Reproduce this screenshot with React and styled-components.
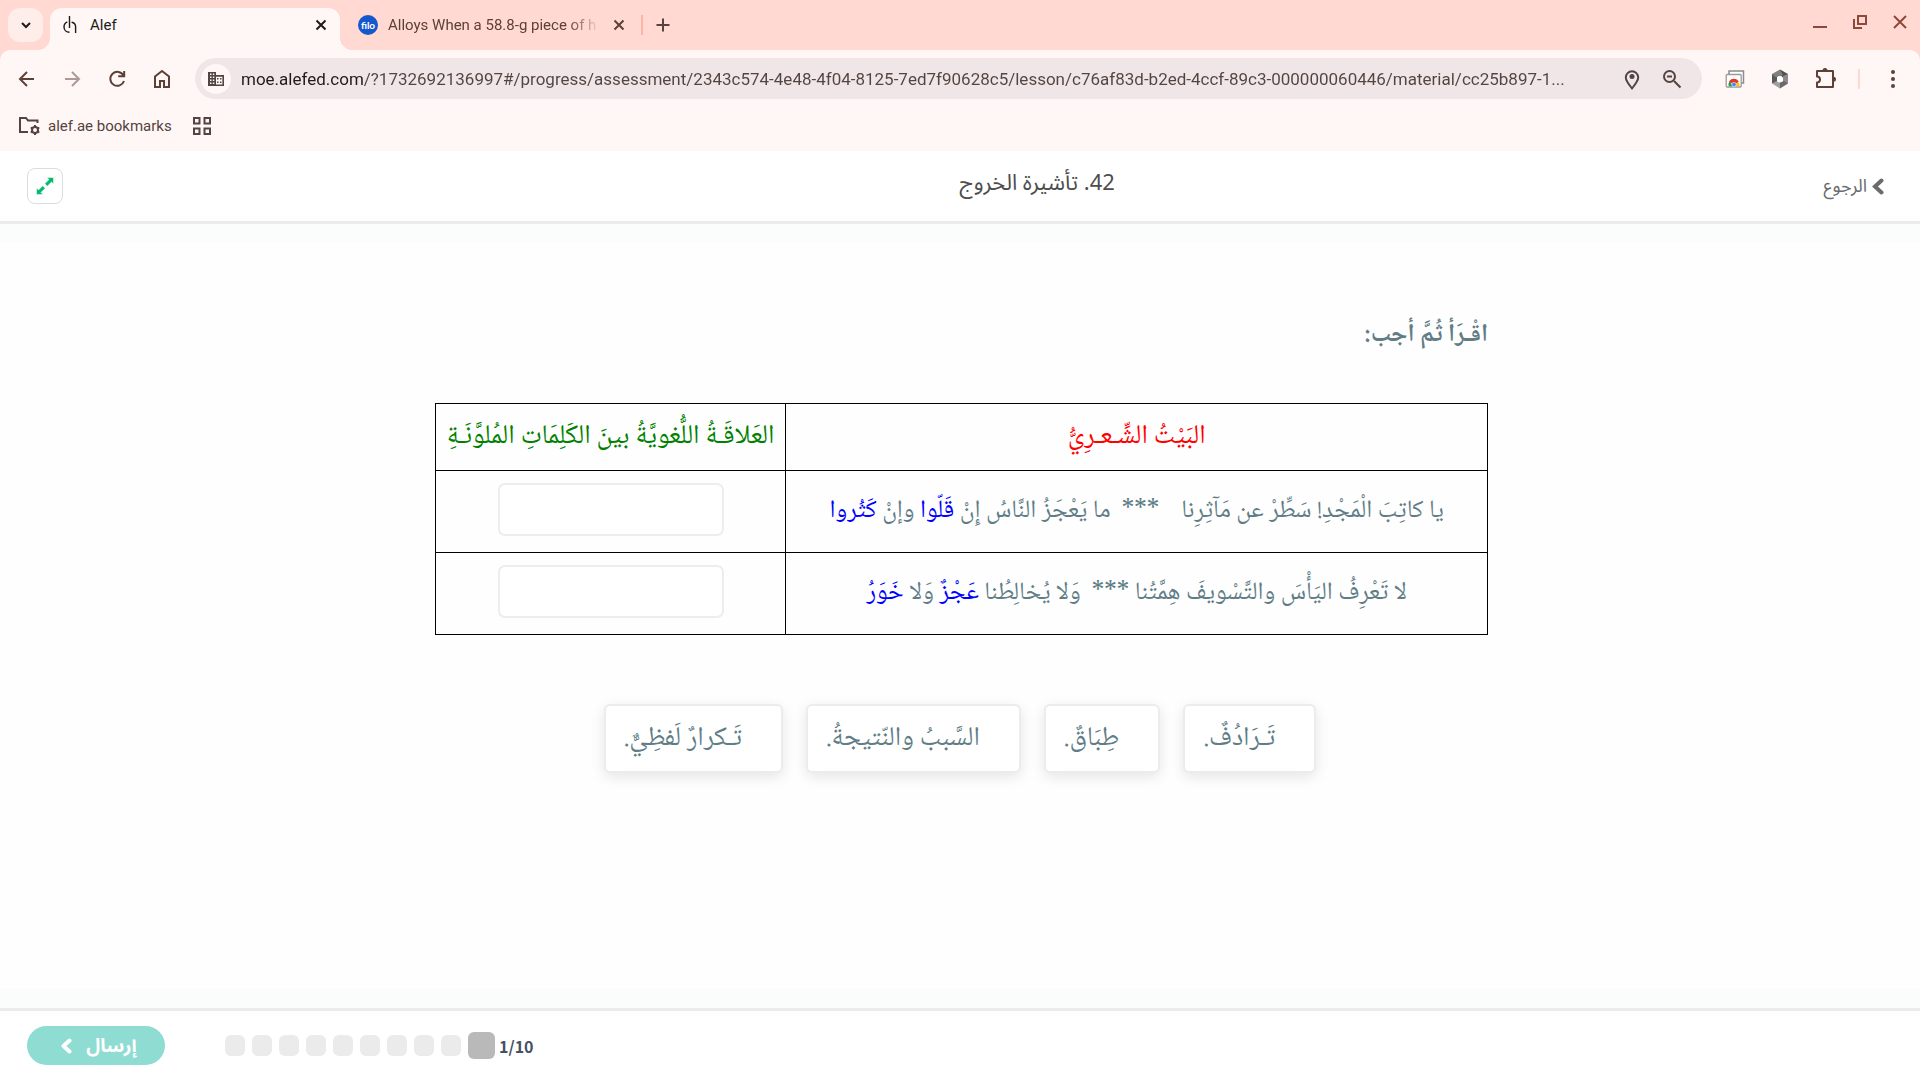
import React from "react";
import styled, { createGlobalStyle } from "styled-components";

const Global = createGlobalStyle`
  * { box-sizing: border-box; }
  html, body, #root { height: 100%; }
  body { margin: 0; background: #fefefe; font-family: Roboto, "Noto Sans", sans-serif; }
  button, input { font: inherit; color: inherit; padding: 0; margin: 0; border: 0; background: none; }
  button { cursor: pointer; }
  svg { display: block; }
`;

const naskh = `"Noto Naskh Arabic", "Noto Sans", "DejaVu Sans", sans-serif`;
const arabicUi = `"Noto Sans Arabic", "Noto Sans CJK SC", "Noto Sans", "DejaVu Sans", sans-serif`;

const Screen = styled.div`
  min-height: 100%;
  display: flex;
  flex-direction: column;
`;

/* ---------- browser ---------- */

const Browser = styled.header`
  background: #ffd9d2;
  color: #534341;
`;

const TabStrip = styled.div`
  display: flex;
  align-items: center;
  height: 50px;
  padding: 8px 12px 0 8px;
`;

const TabSearch = styled.button`
  width: 35px;
  height: 34px;
  margin: 0 7px 8px 0;
  border-radius: 12px;
  background: #ffede9;
  color: #201a19;
  display: grid;
  place-items: center;
`;

const Tab = styled.div`
  position: relative;
  display: flex;
  align-items: center;
  height: 42px;
  padding: 0 ${(p) => (p.$active ? 10 : 13)}px 8px ${(p) => (p.$active ? 13 : 18)}px;
  font-size: 15px;
  line-height: 20px;
  width: ${(p) => (p.$active ? 290 : 301)}px;
  border-radius: 12px 12px 0 0;
  background: ${(p) => (p.$active ? "#fff7f5" : "transparent")};
  color: ${(p) => (p.$active ? "#201a19" : "#5d4037")};
  &::before, &::after {
    content: ${(p) => (p.$active ? '""' : "none")};
    position: absolute;
    bottom: 0;
    width: 12px;
    height: 12px;
  }
  &::before { left: -12px; background: radial-gradient(circle at 0 0, transparent 12px, #fff7f5 12px); }
  &::after { right: -12px; background: radial-gradient(circle at 100% 0, transparent 12px, #fff7f5 12px); }
`;

const TabTitle = styled.span`
  flex: 1;
  overflow: hidden;
  white-space: nowrap;
  margin: 0 12px 0 ${(p) => (p.$faded ? 10 : 13)}px;
  ${(p) => p.$faded && "mask-image: linear-gradient(90deg, #000 180px, transparent 212px);"}
`;

const TabButton = styled.button`
  width: 18px;
  height: 18px;
  display: grid;
  place-items: center;
`;

const FiloMark = styled.span`
  width: 20px;
  height: 20px;
  border-radius: 50%;
  background: #1557cc;
  color: #fff;
  font: bold 10px/20px Lato, sans-serif;
  text-align: center;
`;

const StripDivider = styled.span`
  width: 2px;
  height: 20px;
  margin: 0 11px 8px 0;
  background: #ffb4a5;
`;

const NewTab = styled(TabButton)`
  margin: 0 auto 8px 0;
`;

const WindowButtons = styled.div`
  display: flex;
  gap: 24px;
  margin-bottom: 14px;
  color: #8f4739;
`;

const WindowButton = styled.button`
  width: 16px;
  height: 16px;
`;

const Toolbar = styled.div`
  display: flex;
  align-items: center;
  height: 57px;
  padding: 0 15px;
  background: #fff7f5;
  border-radius: 10px 10px 0 0;
  color: #5d4037;
`;

const NavButtons = styled.div`
  display: flex;
  gap: 21px;
  margin-right: 21px;
`;

const IconButton = styled.button`
  width: 24px;
  height: 24px;
  display: grid;
  place-items: center;
  opacity: ${(p) => (p.disabled ? 0.5 : 1)};
`;

const AddressBar = styled.div`
  flex: 1;
  display: flex;
  align-items: center;
  height: 41px;
  padding: 0 18px 0 6px;
  border-radius: 21px;
  background: #f1e6e7;
  color: #534341;
`;

const SiteChip = styled.button`
  width: 30px;
  height: 30px;
  border-radius: 50%;
  background: #fff7f5;
  display: grid;
  place-items: center;
  margin-right: 10px;
`;

const Url = styled.input`
  flex: 1;
  min-width: 0;
  margin-right: 10px;
  font-size: 17px;
  height: 24px;
  outline: 0;
  text-overflow: ellipsis;
  -webkit-text-fill-color: transparent;
  background: linear-gradient(90deg, #201a19 122px, #534341 122px);
  -webkit-background-clip: text;
  background-clip: text;
`;

const AddressActions = styled.div`
  display: flex;
  gap: 16px;
`;

const Extensions = styled.div`
  display: flex;
  align-items: center;
  gap: 21px;
  margin-left: 21px;
`;

const ToolbarDivider = styled.span`
  width: 2px;
  height: 20px;
  background: #ffd9d2;
`;

const Bookmarks = styled.nav`
  display: flex;
  align-items: center;
  gap: 20px;
  height: 44px;
  padding: 0 18px 6px;
  background: #fff7f5;
  font-size: 15px;
  line-height: 20px;
`;

const Bookmark = styled.button`
  display: flex;
  align-items: center;
  gap: 8px;
`;

/* ---------- lesson page ---------- */

const LessonBar = styled.header`
  display: flex;
  align-items: center;
  justify-content: space-between;
  height: 73px;
  padding: 0 36px 0 27px;
  border-bottom: 3px solid #ebebeb;
  background: #fff;
`;

const Expand = styled.button`
  width: 36px;
  height: 36px;
  border: 1px solid #dcdcdc;
  border-radius: 8px;
  display: grid;
  place-items: center;
`;

const LessonTitle = styled.h1`
  margin: 0 0 6px 188px;
  font: 400 22px/32px ${arabicUi};
  color: #4d4d4d;
`;

const Back = styled.a`
  display: flex;
  align-items: center;
  gap: 4px;
  color: #6b6b6b;
  font: 400 18px/32px ${arabicUi};
  text-decoration: none;
`;

const Stage = styled.main`
  flex: 1;
  direction: rtl;
  border: solid #fbfdfc;
  border-width: 18px 0 20px;
  color: #607d86;
  font-family: ${naskh};
`;

const Question = styled.section`
  width: 55%;
  margin: 0 auto;
  padding: 72px 0 0 3px;
`;

const Prompt = styled.h2`
  margin: 0 0 45px;
  font-size: 25px;
  line-height: 44px;
`;

const Grid = styled.table`
  width: 100%;
  border-collapse: collapse;
  table-layout: fixed;
  font-size: 25px;
  line-height: 44px;
`;

const Head = styled.th`
  width: ${(p) => p.$width};
  height: 67px;
  padding: 0;
  border: 1px solid #000;
  font-size: 27px;
  font-weight: 400;
  color: ${(p) => p.$color};
  white-space: nowrap;
`;

const Cell = styled.td`
  height: 82px;
  padding: 0;
  border: 1px solid #000;
  text-align: center;
  white-space: nowrap;
`;

const Marked = styled.span`
  color: #00f;
`;

const Slot = styled.input`
  display: block;
  width: 226px;
  max-width: 90%;
  height: 53px;
  margin: 0 auto 4px;
  border: 2px solid #ededed;
  border-radius: 7px;
  background: #fff;
  text-align: center;
`;

const Options = styled.div`
  display: flex;
  justify-content: center;
  gap: 23px;
  padding-top: 69px;
`;

const Option = styled.button`
  height: 69px;
  padding: 0 39px 0 18px;
  border: 2px solid #ececec;
  border-radius: 6px;
  background: #fff;
  box-shadow: 0 4px 14px rgba(0, 0, 0, 0.1);
  font-size: 27px;
  line-height: 44px;
  white-space: nowrap;
`;

const Footer = styled.footer`
  display: flex;
  align-items: center;
  height: 72px;
  padding: 0 27px;
  border-top: 3px solid #ebebeb;
  background: #fff;
`;

const Submit = styled.button`
  display: flex;
  align-items: center;
  justify-content: center;
  gap: 14px;
  width: 138px;
  height: 39px;
  padding-left: 5px;
  margin-right: 60px;
  border-radius: 20px;
  background: #8fdcd3;
  color: #fff;
  font: 700 19px/36px ${arabicUi};
`;

const Steps = styled.div`
  display: flex;
  align-items: center;
  gap: 7px;
`;

const Step = styled.span`
  width: ${(p) => (p.$current ? 27 : 20)}px;
  height: ${(p) => (p.$current ? 27 : 21)}px;
  border-radius: 6px;
  background: ${(p) => (p.$current ? "#b9b9b9" : "#ebebeb")};
`;

const Count = styled.span`
  margin-left: 4px;
  color: #465064;
  font: 700 16px/24px "Noto Sans CJK SC", "Noto Sans", sans-serif;
`;

/* ---------- drawings ---------- */

const Line = ({ size = 24, w = 2, box = 24, children, ...rest }) => (
  <svg width={size} height={size} viewBox={`0 0 ${box} ${box}`} fill="none" stroke="currentColor" strokeWidth={w} aria-hidden="true" {...rest}>
    {children}
  </svg>
);

const Cross = () => (
  <Line size={12} box={12} w={2}><path d="M1.5 1.5l9 9M10.5 1.5l-9 9" /></Line>
);

const AlefIcon = () => (
  <Line size={14} box={14} w={1.4} height={18} viewBox="0 0 14 18">
    <path d="M6.500 0v12M4.300 5.800C2.300 6.600 1 8.500 1 11c0 3 2.300 5.300 5.500 5.300M8.600 6.200c2.600.4 4 2.200 4 4.600V17" />
  </Line>
);

const Building = () => (
  <svg width="18" height="16" viewBox="0 0 18 16" fill="#534341" aria-hidden="true">
    <path d="M1 1h8v3h8v11H1z M3 2.500v1.500h1.500V2.500z M5.800 2.500v1.500h1.500V2.500z M3 5.500v1.500h1.500V5.500z M5.800 5.500v1.500h1.500V5.500z M3 8.500v1.500h1.500V8.500z M5.800 8.500v1.500h1.500V8.500z M3 11.500v1.500h1.500v-1.500z M5.800 11.500v1.500h1.500v-1.500z M9 5.700v7.700h6.400V5.700z" fillRule="evenodd" />
    <path d="M10 7h1.500v1.500H10zM13 7h1.500v1.500H13zM10 10.500h1.500V12H10zM13 10.500h1.500V12H13z" />
  </svg>
);

const ChromeCards = () => (
  <svg width="20" height="20" viewBox="0 0 20 20" aria-hidden="true">
    <path d="M4 5V2h14.500v12H16" fill="#fff" stroke="#8b8b8b" strokeWidth="1.500" />
    <rect x="1.200" y="5.500" width="15" height="12.500" rx="1" fill="#fff" stroke="#9a9a9a" strokeWidth="1.300" />
    <path d="M3.800 17.300a5 5 0 0 1 1-5l3 5z" fill="#1fa050" />
    <path d="M4 13a5.400 5.400 0 0 1 9.800 0l-3.200 1.500H7z" fill="#ea3323" />
    <path d="M10.500 14h3.700q.6 1.700.3 3.300H10z" fill="#fbc116" />
    <circle cx="9" cy="15.500" r="2.200" fill="#4285f4" stroke="#fff" strokeWidth=".5" />
  </svg>
);

const Hexagon = () => (
  <svg width="18" height="20" viewBox="0 0 18 20" aria-hidden="true">
    <path d="M9 .5l8 4.500-4.500 5L9 6z" fill="#4f4f4f" />
    <path d="M17 5v9.500l-5-.5V7z" fill="#8b8b8b" />
    <path d="M17 14.500l-8 5-3-5 7-2.500z" fill="#6a6a6a" />
    <path d="M9 19.500l-8-5 3.500-3.500L9 14.500z" fill="#a0a0a0" />
    <path d="M1 14.500V5l5 1v6z" fill="#5a5a5a" />
    <path d="M1 5l8-4.500L12 6 5 8.500z" fill="#808080" />
    <circle cx="9" cy="10" r="3" fill="#fff" />
  </svg>
);

const options = ["تَـرَادُفٌ.", "طِبَاقٌ.", "السَّببُ والنّتيجةُ.", "تَـكرارٌ لَفظِيٌّ."];
const TOTAL = 10;

export default function App() {
  return (
    <>
      <Global />
      <Screen>
        <Browser>
          <TabStrip>
            <TabSearch aria-label="Search tabs">
              <Line size={12} box={12}><path d="M2 4l4 4 4-4" /></Line>
            </TabSearch>
            <Tab $active>
              <AlefIcon />
              <TabTitle>Alef</TabTitle>
              <TabButton aria-label="Close tab"><Cross /></TabButton>
            </Tab>
            <Tab>
              <FiloMark>filo</FiloMark>
              <TabTitle $faded>Alloys When a 58.8-g piece of h</TabTitle>
              <TabButton aria-label="Close tab"><Cross /></TabButton>
            </Tab>
            <StripDivider />
            <NewTab aria-label="New tab">
              <Line size={14} box={14}><path d="M7 .5v13M.5 7h13" /></Line>
            </NewTab>
            <WindowButtons>
              <WindowButton aria-label="Minimise"><Line size={16} box={16}><path d="M1 13h14" /></Line></WindowButton>
              <WindowButton aria-label="Restore"><Line size={16} box={16}><path d="M6 2h8v8H6zM2 5v9h8" /></Line></WindowButton>
              <WindowButton aria-label="Close"><Line size={16} box={16}><path d="M2 2l12 12M14 2L2 14" /></Line></WindowButton>
            </WindowButtons>
          </TabStrip>
          <Toolbar>
            <NavButtons>
              <IconButton aria-label="Back"><Line><path d="M19 12H6M12 5l-7 7 7 7" /></Line></IconButton>
              <IconButton aria-label="Forward" disabled><Line><path d="M5 12h13M12 5l7 7-7 7" /></Line></IconButton>
              <IconButton aria-label="Reload"><Line><path d="M18.500 8.500A7 7 0 1 0 19 14M19.200 4v5.200h-6" /></Line></IconButton>
              <IconButton aria-label="Home"><Line><path d="M5 20V9.500L12 4l7 5.500V20h-5v-6h-4v6z" /></Line></IconButton>
            </NavButtons>
            <AddressBar>
              <SiteChip aria-label="Site information"><Building /></SiteChip>
              <Url
                aria-label="Address"
                readOnly
                value="moe.alefed.com/?1732692136997#/progress/assessment/2343c574-4e48-4f04-8125-7ed7f90628c5/lesson/c76af83d-b2ed-4ccf-89c3-000000060446/material/cc25b897-1..."
              />
              <AddressActions>
                <IconButton aria-label="Location">
                  <Line><path d="M12 21.500c-4-5-6.200-8-6.200-11a6.200 6.200 0 0 1 12.400 0c0 3-2.200 6-6.200 11z" /><circle cx="12" cy="9.500" r="2.500" fill="currentColor" stroke="none" /></Line>
                </IconButton>
                <IconButton aria-label="Zoom">
                  <Line><circle cx="9.500" cy="9.500" r="5.500" /><path d="M14 14l6.500 6.500M7 9.500h5" /></Line>
                </IconButton>
              </AddressActions>
            </AddressBar>
            <Extensions>
              <IconButton aria-label="Screen capture"><ChromeCards /></IconButton>
              <IconButton aria-label="Extension"><Hexagon /></IconButton>
              <IconButton aria-label="Extensions">
                <Line><path d="M4 4h16v16H4v-4.500c4 0 4-6 0-6z" strokeLinejoin="round" /><path d="M9.500 3.500a2.500 2.500 0 0 1 5 0zM20.500 9.700a2.500 2.500 0 0 1 0 5z" fill="currentColor" stroke="none" /></Line>
              </IconButton>
              <ToolbarDivider />
              <IconButton aria-label="Menu">
                <Line stroke="none" fill="currentColor"><circle cx="12" cy="5" r="2" /><circle cx="12" cy="12" r="2" /><circle cx="12" cy="19" r="2" /></Line>
              </IconButton>
            </Extensions>
          </Toolbar>
          <Bookmarks>
            <Bookmark>
              <Line size={22} box={22}>
                <path d="M10 17H2V3h6l2 2.500h9.500V8" />
                <circle cx="17" cy="15" r="3" />
                <path d="M17 10v2M17 18v2M12.700 12.500l1.700 1M19.600 16.500l1.700 1M12.700 17.500l1.700-1M19.600 13.500l1.700-1" />
              </Line>
              alef.ae bookmarks
            </Bookmark>
            <Bookmark aria-label="Apps">
              <Line size={20} box={20}><path d="M2 2h5.500v5.500H2zM12.500 2H18v5.500h-5.500zM2 12.500h5.500V18H2zM12.500 12.500H18V18h-5.500z" /></Line>
            </Bookmark>
          </Bookmarks>
        </Browser>

        <LessonBar>
          <Expand aria-label="Full screen">
            <svg width="18" height="18" viewBox="0 0 18 18" fill="#06b870" aria-hidden="true">
              <path d="M17.500.5v6.500l-2-2-4.200 4.200-2.500-2.500L13 2.500l-2-2zM.5 17.500V11l2 2 4.200-4.200 2.500 2.500L5 15.500l2 2z" stroke="#fff" strokeWidth=".5" />
            </svg>
          </Expand>
          <LessonTitle dir="rtl">42. تأشيرة الخروج</LessonTitle>
          <Back href="#" dir="rtl">
            <Line size={13} box={13} w={4} height={17} viewBox="0 0 13 17"><path d="M10.500 2.500L4 8.500l6.500 6" strokeLinecap="round" /></Line>
            الرجوع
          </Back>
        </LessonBar>

        <Stage lang="ar">
          <Question>
            <Prompt>اقْـرَأ ثُمَّ أجب:</Prompt>
            <Grid>
              <thead>
                <tr>
                  <Head $width="66.7%" $color="#f00">البَيْتُ الشِّـعـرِيُّ</Head>
                  <Head $width="33.3%" $color="#008000">العَلاقَـةُ اللُّغويَّةُ بينَ الكَلِمَاتِ المُلوَّنَـةِ</Head>
                </tr>
              </thead>
              <tbody>
                <tr>
                  <Cell>
                    يا كاتِبَ الْمَجْدِ! سَطِّرْ عن مَآثِرِنا&nbsp;&nbsp;&nbsp; ***&nbsp; ما يَعْجَزُ النَّاسُ إِنْ <Marked>قَلّوا</Marked> وإنْ <Marked>كَثُروا</Marked>
                  </Cell>
                  <Cell><Slot aria-label="العلاقة الأولى" /></Cell>
                </tr>
                <tr>
                  <Cell>
                    لا تَعْرِفُ اليَأْسَ والتَّسْويفَ هِمَّتُنا ***&nbsp; وَلا يُخالِطُنا <Marked>عَجْزٌ</Marked> وَلا <Marked>خَوَرُ</Marked>
                  </Cell>
                  <Cell><Slot aria-label="العلاقة الثانية" /></Cell>
                </tr>
              </tbody>
            </Grid>
          </Question>
          <Options>
            {options.map((o) => <Option key={o}>{o}</Option>)}
          </Options>
        </Stage>

        <Footer>
          <Submit dir="rtl">
            إرسال
            <Line size={12} box={12} w={4} height={16} viewBox="0 0 12 16"><path d="M9.500 2.500L3.500 8l6 5.500" strokeLinecap="round" strokeLinejoin="round" /></Line>
          </Submit>
          <Steps>
            {Array.from({ length: TOTAL }, (_, i) => <Step key={i} $current={i === TOTAL - 1} />)}
          </Steps>
          <Count>1/10</Count>
        </Footer>
      </Screen>
    </>
  );
}
